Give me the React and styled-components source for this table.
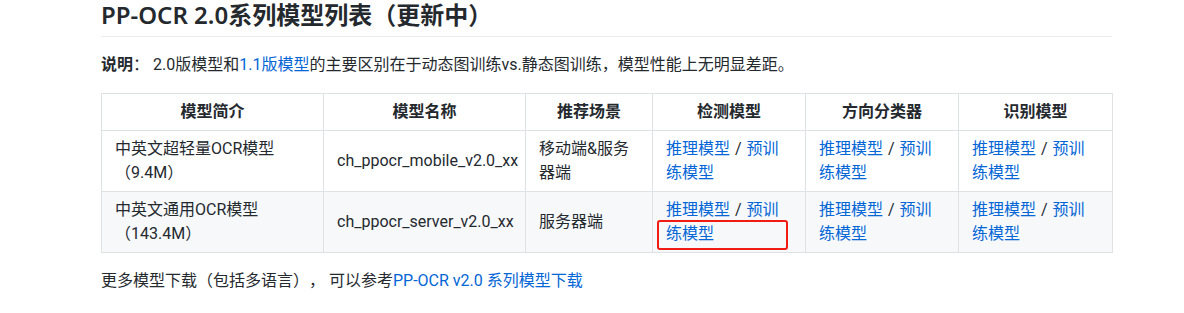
import React from "react";
import styled, { createGlobalStyle } from "styled-components";

const Global = createGlobalStyle`
  html, body { margin: 0; padding: 0; background: #fff; }
  body {
    font-family: Roboto, "Noto Sans CJK SC", sans-serif;
    color: #24292e;
    font-size: 16px;
    line-height: 1.5;
    text-spacing-trim: space-all;
  }
`;

const Page = styled.div`
  padding: 0 72px 0 101px;
  width: 1011px;
`;

const Heading = styled.h2`
  margin: 0 0 16px;
  padding-bottom: 6px;
  font-size: 24px;
  line-height: 30px;
  font-weight: 600;
  border-bottom: 1px solid #eaecef;
  font-family: "Noto Sans", "Noto Sans CJK SC", sans-serif;
`;

const Para = styled.p`
  margin: 0 0 16px;
  font-size: 16px;
  line-height: 24px;
`;

const Link = styled.a`
  color: #0366d6;
  text-decoration: none;
`;

const Table = styled.table`
  border-collapse: collapse;
  border-spacing: 0;
  table-layout: fixed;
  width: 1011px;
  margin: 0 0 16px;
`;

const Row = styled.tr`
  background: ${(p) => (p.$alt ? "#f6f8fa" : "#fff")};
  border-top: 1px solid #c6cbd1;
`;

const Th = styled.th`
  padding: 6px 13px;
  border: 1px solid #dfe2e5;
  font-weight: 600;
  text-align: center;
  line-height: 24px;
`;

const Td = styled.td`
  position: relative;
  padding: 6px 13px;
  border: 1px solid #dfe2e5;
  text-align: left;
  line-height: 24px;
  vertical-align: middle;
`;

const Sep = styled.span`
  word-spacing: 1px;
`;

const Mark = styled.span`
  position: absolute;
  left: 4px;
  top: 28px;
  width: 127px;
  height: 26px;
  border: 2px solid #f21b14;
  border-radius: 3px;
  pointer-events: none;
`;

const widths = [222, 202, 127, 153, 153, 154];

const Links = () => (
  <>
    <Link href="#">推理模型</Link>
    <Sep> / </Sep>
    <Link href="#">预训练模型</Link>
  </>
);

export default function App() {
  return (
    <>
      <Global />
      <Page>
        <Heading>PP-OCR 2.0系列模型列表（更新中）</Heading>
        <Para>
          <strong>说明</strong>： 2.0版模型和<Link href="#">1.1版模型</Link>
          的主要区别在于动态图训练vs.静态图训练，模型性能上无明显差距。
        </Para>
        <Table>
          <colgroup>
            {widths.map((w, i) => (
              <col key={i} style={{ width: w }} />
            ))}
          </colgroup>
          <thead>
            <Row>
              <Th>模型简介</Th>
              <Th>模型名称</Th>
              <Th>推荐场景</Th>
              <Th>检测模型</Th>
              <Th>方向分类器</Th>
              <Th>识别模型</Th>
            </Row>
          </thead>
          <tbody>
            <Row>
              <Td>中英文超轻量OCR模型（9.4M）</Td>
              <Td>ch_ppocr_mobile_v2.0_xx</Td>
              <Td>移动端&amp;服务器端</Td>
              <Td><Links /></Td>
              <Td><Links /></Td>
              <Td><Links /></Td>
            </Row>
            <Row $alt>
              <Td>中英文通用OCR模型（143.4M）</Td>
              <Td>ch_ppocr_server_v2.0_xx</Td>
              <Td>服务器端</Td>
              <Td>
                <Links />
                <Mark />
              </Td>
              <Td><Links /></Td>
              <Td><Links /></Td>
            </Row>
          </tbody>
        </Table>
        <Para>
          更多模型下载（包括多语言）， 可以参考
          <Link href="#">PP-OCR v2.0 系列模型下载</Link>
        </Para>
      </Page>
    </>
  );
}
